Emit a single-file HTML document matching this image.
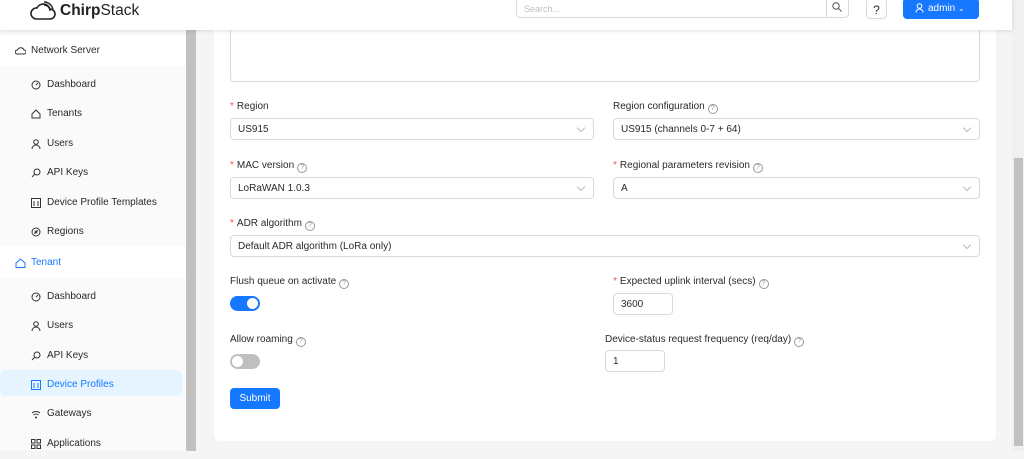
<!DOCTYPE html>
<html><head><style>
*{box-sizing:border-box;margin:0;padding:0}
body{width:1024px;height:451px;overflow:hidden;background:#f5f5f5;font-family:"Liberation Sans",sans-serif;font-size:10px;color:rgba(0,0,0,.85);position:relative}
.a{position:absolute}
.hdr{left:0;top:0;width:1012px;height:30px;background:#fff;box-shadow:0 1px 4px rgba(0,0,0,.12);z-index:5}
.side{left:0;top:30px;width:186px;height:421px;background:#fafafa}
.mi{position:absolute;left:0;width:182px;height:26px;line-height:30px;padding-left:47px;font-size:10px}
.mi svg{position:absolute;left:31px;top:10px}
.card{left:214px;top:20px;width:782px;height:421px;background:#fff;border-radius:6px}
.inp{position:absolute;border:1px solid #d9d9d9;border-radius:4px;background:#fff;height:22px;line-height:21px;padding-left:7px}
.lbl{position:absolute;font-size:10px;top:0}
.req{color:#ff4d4f;margin-right:3px}
.q{display:inline-block;width:10px;height:10px;border:1px solid #999;border-radius:50%;font-size:7px;line-height:8px;text-align:center;color:#999;margin-left:3px;vertical-align:-1px}
.chev{position:absolute;right:9px;top:6px;width:6px;height:6px;border-right:1px solid #bbb;border-bottom:1px solid #bbb;transform:rotate(45deg)}
</style></head><body>
<div class="a hdr">
 <svg class="a" style="left:30px;top:1px" width="28" height="20" viewBox="0 0 28 20"><path d="M6 18h14a5 5 0 0 0 0-10a7 7 0 0 0-13-1a5 5 0 0 0-1 11z" fill="none" stroke="#222" stroke-width="1.6"/><path d="M14 4a6 6 0 0 1 6 6M14 1a9 9 0 0 1 9 9" fill="none" stroke="#222" stroke-width="1.4"/></svg>
 <div class="a" style="left:60px;top:2px;font-size:15.5px;color:#222"><b>Chirp</b>Stack</div>
 <div class="a" style="left:516px;top:-2px;width:333px;height:20px;border:1px solid #d9d9d9;border-radius:4px;background:#fff"><span style="position:absolute;left:7px;top:5px;color:#bfbfbf;font-size:9px">Search...</span><div style="position:absolute;right:0;top:-1px;width:22px;height:20px;border-left:1px solid #d9d9d9"><svg style="position:absolute;left:5px;top:4px" width="10" height="10"><circle cx="4" cy="4" r="3.2" fill="none" stroke="#555"/><path d="M6.5 6.5l3 3" stroke="#555"/></svg></div></div>
 <div class="a" style="left:866px;top:-2px;width:21px;height:21px;border:1px solid #d9d9d9;border-radius:4px;text-align:center;line-height:22px;font-size:12px">?</div>
 <div class="a" style="left:903px;top:-2px;width:76px;height:21px;background:#1677ff;border-radius:4px;color:#fff;font-size:10px;line-height:21px;padding-left:25px">admin <span style="font-size:8px">&#8964;</span><svg style="position:absolute;left:12px;top:5px" width="9" height="10"><circle cx="4.5" cy="3" r="2.3" fill="none" stroke="#fff"/><path d="M1 9.5a3.5 3.5 0 0 1 7 0" fill="none" stroke="#fff"/></svg></div>
</div>
<div class="a side">
 <div class="mi" style="top:6px;background:#fff;width:186px;padding-left:31px;height:30px;line-height:30px"><svg style="left:15px;top:11px" width="11" height="8"><path d="M2 7h7a2 2 0 0 0 0-4a3.5 3.5 0 0 0-6.5 0a2 2 0 0 0-.5 4z" fill="none" stroke="#333"/></svg>Network Server</div>
 <div class="mi" style="top:40px"><svg width="10" height="10"><circle cx="5" cy="5" r="4" fill="none" stroke="#333"/><path d="M5 5l2-2" stroke="#333"/></svg>Dashboard</div>
 <div class="mi" style="top:69px"><svg width="10" height="10"><path d="M1 5l4-4 4 4v4H1z" fill="none" stroke="#333"/></svg>Tenants</div>
 <div class="mi" style="top:99px"><svg width="10" height="10"><circle cx="5" cy="3" r="2.3" fill="none" stroke="#333"/><path d="M1 10a4 4 0 0 1 8 0" fill="none" stroke="#333"/></svg>Users</div>
 <div class="mi" style="top:128px"><svg width="10" height="10"><circle cx="6" cy="4" r="3" fill="none" stroke="#333"/><path d="M4 6l-3 3" stroke="#333"/></svg>API Keys</div>
 <div class="mi" style="top:158px"><svg width="10" height="10"><rect x=".5" y=".5" width="9" height="9" fill="none" stroke="#333"/><path d="M3 3v5M7 3v5" stroke="#333"/></svg>Device Profile Templates</div>
 <div class="mi" style="top:187px"><svg width="10" height="10"><circle cx="5" cy="5" r="4" fill="none" stroke="#333"/><path d="M3 7l1-3 3-1-1 3z" fill="#333"/></svg>Regions</div>
 <div class="mi" style="top:216px;background:#fff;width:186px;padding-left:31px;height:32px;line-height:34px;color:#1677ff"><svg style="left:15px;top:12px" width="11" height="10"><path d="M1 5l4.5-4 4.5 4v4.5H1z" fill="none" stroke="#1677ff"/></svg>Tenant</div>
 <div class="mi" style="top:252px"><svg width="10" height="10"><circle cx="5" cy="5" r="4" fill="none" stroke="#333"/><path d="M5 5l2-2" stroke="#333"/></svg>Dashboard</div>
 <div class="mi" style="top:281px"><svg width="10" height="10"><circle cx="5" cy="3" r="2.3" fill="none" stroke="#333"/><path d="M1 10a4 4 0 0 1 8 0" fill="none" stroke="#333"/></svg>Users</div>
 <div class="mi" style="top:311px"><svg width="10" height="10"><circle cx="6" cy="4" r="3" fill="none" stroke="#333"/><path d="M4 6l-3 3" stroke="#333"/></svg>API Keys</div>
 <div class="mi" style="top:340px;background:#e6f4ff;color:#1677ff;border-radius:6px"><svg width="10" height="10"><rect x=".5" y=".5" width="9" height="9" fill="none" stroke="#1677ff"/><path d="M3 3v5M7 3v5" stroke="#1677ff"/></svg>Device Profiles</div>
 <div class="mi" style="top:369px"><svg width="10" height="10"><path d="M1 4a6 6 0 0 1 8 0M2.5 6a4 4 0 0 1 5 0" fill="none" stroke="#333"/><circle cx="5" cy="8.5" r="1" fill="#333"/></svg>Gateways</div>
 <div class="mi" style="top:399px"><svg width="10" height="10"><rect x=".5" y=".5" width="3.5" height="3.5" fill="none" stroke="#333"/><rect x="6" y=".5" width="3.5" height="3.5" fill="none" stroke="#333"/><rect x=".5" y="6" width="3.5" height="3.5" fill="none" stroke="#333"/><rect x="6" y="6" width="3.5" height="3.5" fill="none" stroke="#333"/></svg>Applications</div>
</div>
<div class="a" style="left:186px;top:30px;width:10px;height:421px;background:#c1c1c1"></div>
<div class="a" style="left:1012px;top:0;width:12px;height:451px;background:#f0f0f0"></div>
<div class="a" style="left:1014px;top:158px;width:9px;height:288px;background:#c1c1c1"></div>
<div class="a card"></div>
<div class="inp" style="left:230px;top:20px;width:750px;height:62px"></div>
<div class="lbl" style="left:230px;top:101px"><span class="req">*</span>Region</div>
<div class="inp" style="left:230px;top:118px;width:364px">US915<i class="chev"></i></div>
<div class="lbl" style="left:613px;top:101px">Region configuration<span class="q">?</span></div>
<div class="inp" style="left:613px;top:118px;width:367px">US915 (channels 0-7 + 64)<i class="chev"></i></div>
<div class="lbl" style="left:230px;top:160px"><span class="req">*</span>MAC version<span class="q">?</span></div>
<div class="inp" style="left:230px;top:177px;width:364px">LoRaWAN 1.0.3<i class="chev"></i></div>
<div class="lbl" style="left:613px;top:160px"><span class="req">*</span>Regional parameters revision<span class="q">?</span></div>
<div class="inp" style="left:613px;top:177px;width:367px">A<i class="chev"></i></div>
<div class="lbl" style="left:230px;top:218px"><span class="req">*</span>ADR algorithm<span class="q">?</span></div>
<div class="inp" style="left:230px;top:235px;width:750px">Default ADR algorithm (LoRa only)<i class="chev"></i></div>
<div class="lbl" style="left:230px;top:276px">Flush queue on activate<span class="q">?</span></div>
<div class="a" style="left:230px;top:296px;width:30px;height:15px;border-radius:8px;background:#1677ff"><div style="position:absolute;right:2px;top:2px;width:11px;height:11px;border-radius:50%;background:#fff"></div></div>
<div class="lbl" style="left:613px;top:276px"><span class="req">*</span>Expected uplink interval (secs)<span class="q">?</span></div>
<div class="inp" style="left:613px;top:293px;width:60px">3600</div>
<div class="lbl" style="left:230px;top:334px">Allow roaming<span class="q">?</span></div>
<div class="a" style="left:230px;top:354px;width:30px;height:15px;border-radius:8px;background:#bfbfbf"><div style="position:absolute;left:2px;top:2px;width:11px;height:11px;border-radius:50%;background:#fff"></div></div>
<div class="lbl" style="left:605px;top:334px">Device-status request frequency (req/day)<span class="q">?</span></div>
<div class="inp" style="left:605px;top:350px;width:60px">1</div>
<div class="a" style="left:230px;top:388px;width:50px;height:21px;background:#1677ff;border-radius:4px;color:#fff;text-align:center;line-height:21px">Submit</div>
</body></html>
